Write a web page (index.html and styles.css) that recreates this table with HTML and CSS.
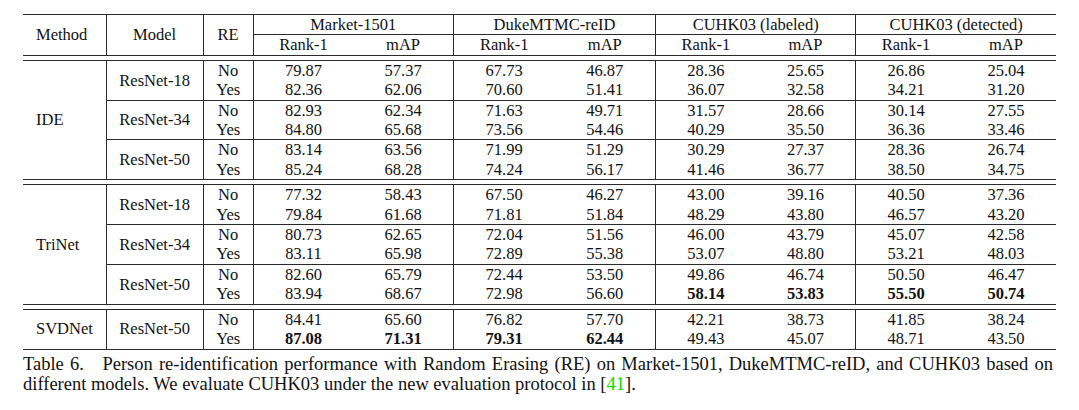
FILE: index.html
```html
<!DOCTYPE html>
<html lang="en">
<head>
<meta charset="utf-8">
<title>Table 6</title>
<link rel="stylesheet" href="styles.css">
</head>
<body>
<div class="page">
  <table class="results">
    <colgroup>
      <col class="c-method"><col class="c-model"><col class="c-re">
      <col class="c-num"><col class="c-num">
      <col class="c-duke"><col class="c-duke">
      <col class="c-num"><col class="c-num">
      <col class="c-num"><col class="c-num">
    </colgroup>
    <thead>
      <tr class="h1">
        <th rowspan="2" class="method">Method</th>
        <th rowspan="2" class="model">Model</th>
        <th rowspan="2" class="re">RE</th>
        <th colspan="2" class="ds">Market-1501</th>
        <th colspan="2" class="ds">DukeMTMC-reID</th>
        <th colspan="2" class="ds">CUHK03 (labeled)</th>
        <th colspan="2" class="ds last">CUHK03 (detected)</th>
      </tr>
      <tr class="h2">
        <th>Rank-1</th><th class="sep">mAP</th>
        <th>Rank-1</th><th class="sep">mAP</th>
        <th>Rank-1</th><th class="sep">mAP</th>
        <th>Rank-1</th><th>mAP</th>
      </tr>
    </thead>
    <tbody>
      <tr class="gap"><td colspan="11"></td></tr>

      <tr>
        <td rowspan="6" class="method">IDE</td>
        <td rowspan="2" class="model">ResNet-18</td>
        <td class="re">No</td>
        <td>79.87</td><td class="sep">57.37</td><td>67.73</td><td class="sep">46.87</td><td>28.36</td><td class="sep">25.65</td><td>26.86</td><td>25.04</td>
      </tr>
      <tr class="end">
        <td class="re">Yes</td>
        <td>82.36</td><td class="sep">62.06</td><td>70.60</td><td class="sep">51.41</td><td>36.07</td><td class="sep">32.58</td><td>34.21</td><td>31.20</td>
      </tr>
      <tr>
        <td rowspan="2" class="model">ResNet-34</td>
        <td class="re">No</td>
        <td>82.93</td><td class="sep">62.34</td><td>71.63</td><td class="sep">49.71</td><td>31.57</td><td class="sep">28.66</td><td>30.14</td><td>27.55</td>
      </tr>
      <tr class="end">
        <td class="re">Yes</td>
        <td>84.80</td><td class="sep">65.68</td><td>73.56</td><td class="sep">54.46</td><td>40.29</td><td class="sep">35.50</td><td>36.36</td><td>33.46</td>
      </tr>
      <tr>
        <td rowspan="2" class="model">ResNet-50</td>
        <td class="re">No</td>
        <td>83.14</td><td class="sep">63.56</td><td>71.99</td><td class="sep">51.29</td><td>30.29</td><td class="sep">27.37</td><td>28.36</td><td>26.74</td>
      </tr>
      <tr>
        <td class="re">Yes</td>
        <td>85.24</td><td class="sep">68.28</td><td>74.24</td><td class="sep">56.17</td><td>41.46</td><td class="sep">36.77</td><td>38.50</td><td>34.75</td>
      </tr>

      <tr class="gap"><td colspan="11"></td></tr>

      <tr>
        <td rowspan="6" class="method">TriNet</td>
        <td rowspan="2" class="model">ResNet-18</td>
        <td class="re">No</td>
        <td>77.32</td><td class="sep">58.43</td><td>67.50</td><td class="sep">46.27</td><td>43.00</td><td class="sep">39.16</td><td>40.50</td><td>37.36</td>
      </tr>
      <tr class="end">
        <td class="re">Yes</td>
        <td>79.84</td><td class="sep">61.68</td><td>71.81</td><td class="sep">51.84</td><td>48.29</td><td class="sep">43.80</td><td>46.57</td><td>43.20</td>
      </tr>
      <tr>
        <td rowspan="2" class="model">ResNet-34</td>
        <td class="re">No</td>
        <td>80.73</td><td class="sep">62.65</td><td>72.04</td><td class="sep">51.56</td><td>46.00</td><td class="sep">43.79</td><td>45.07</td><td>42.58</td>
      </tr>
      <tr class="end">
        <td class="re">Yes</td>
        <td>83.11</td><td class="sep">65.98</td><td>72.89</td><td class="sep">55.38</td><td>53.07</td><td class="sep">48.80</td><td>53.21</td><td>48.03</td>
      </tr>
      <tr>
        <td rowspan="2" class="model">ResNet-50</td>
        <td class="re">No</td>
        <td>82.60</td><td class="sep">65.79</td><td>72.44</td><td class="sep">53.50</td><td>49.86</td><td class="sep">46.74</td><td>50.50</td><td>46.47</td>
      </tr>
      <tr>
        <td class="re">Yes</td>
        <td>83.94</td><td class="sep">68.67</td><td>72.98</td><td class="sep">56.60</td><td class="best">58.14</td><td class="sep best">53.83</td><td class="best">55.50</td><td class="best">50.74</td>
      </tr>

      <tr class="gap"><td colspan="11"></td></tr>

      <tr>
        <td rowspan="2" class="method">SVDNet</td>
        <td rowspan="2" class="model">ResNet-50</td>
        <td class="re">No</td>
        <td>84.41</td><td class="sep">65.60</td><td>76.82</td><td class="sep">57.70</td><td>42.21</td><td class="sep">38.73</td><td>41.85</td><td>38.24</td>
      </tr>
      <tr>
        <td class="re">Yes</td>
        <td class="best">87.08</td><td class="sep best">71.31</td><td class="best">79.31</td><td class="sep best">62.44</td><td>49.43</td><td class="sep">45.07</td><td>48.71</td><td>43.50</td>
      </tr>
    </tbody>
  </table>

  <p class="caption">Table 6.&nbsp;&nbsp; Person re-identification performance with Random Erasing (RE) on Market-1501, DukeMTMC-reID, and CUHK03 based on different models. We evaluate CUHK03 under the new evaluation protocol in [<a class="cite" href="#ref41">41</a>].</p>
</div>
</body>
</html>
```

FILE: styles.css
```css
html, body {
  margin: 0;
  padding: 0;
  background: #ffffff;
}

.page {
  padding: 14px 0 0 23px;
  font-family: "Liberation Serif", "Times New Roman", serif;
  color: #111111;
}

.results {
  width: 1033px;
  table-layout: fixed;
  border-collapse: collapse;
  font-size: 16.5px;
  border-top: 1px solid #2a2a2a;
  border-bottom: 1px solid #2a2a2a;
}

.c-method { width: 83px; }
.c-model { width: 97px; }
.c-re { width: 50px; }
.c-num { width: 100px; }
.c-duke { width: 101px; }

.results th,
.results td {
  padding: 0;
  line-height: 19.4px;
  text-align: center;
  font-weight: normal;
  white-space: nowrap;
}

.results .method {
  text-align: left;
  padding-left: 13px;
  border-right: 1px solid #2a2a2a;
}

.results .model,
.results .re,
.results .sep,
.results .ds {
  border-right: 1px solid #2a2a2a;
}

.results .ds.last {
  border-right: none;
}

.results .h1 .ds {
  border-bottom: 1px solid #2a2a2a;
}

.results .model {
  border-bottom: 1px solid #2a2a2a;
}

.results .end td {
  border-bottom: 1px solid #2a2a2a;
}

.results .gap td {
  height: 4px;
  line-height: 0;
  border-top: 1px solid #2a2a2a;
  border-bottom: 1px solid #2a2a2a;
}

.results .best {
  font-weight: bold;
}

.caption {
  width: 1030px;
  margin: 4px 0 0 0;
  font-size: 18.5px;
  line-height: 20px;
  text-align: justify;
}

.cite {
  color: #00dd00;
  text-decoration: none;
}
```
